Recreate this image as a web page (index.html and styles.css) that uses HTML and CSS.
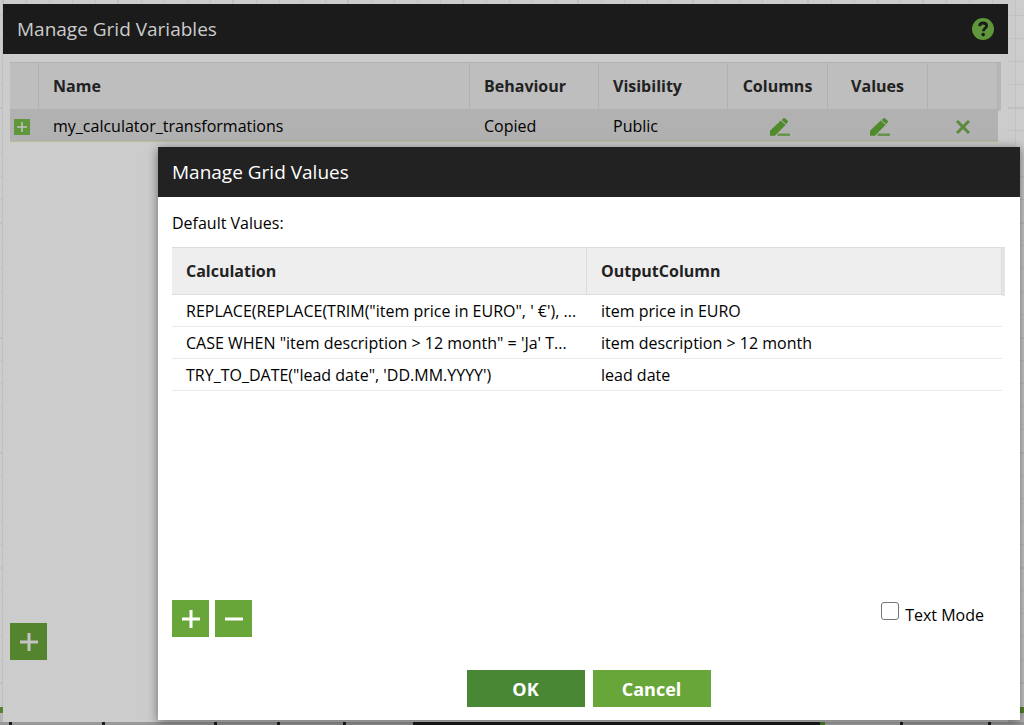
FILE: index.html
```
<!DOCTYPE html>
<html lang="en">
<head>
    <meta charset="UTF-8">
    <meta name="viewport" content="width=device-width, initial-scale=1.0">
    <title>Manage Grid Variables</title>
    <link rel="stylesheet" href="styles.css">
</head>
<body>

    <!-- Grid Variables window -->
    <main class="window">
        <header class="title-bar">
            <h1>Manage Grid Variables</h1>
            <button type="button" class="help-btn" aria-label="Help">
                <svg viewBox="0 0 22 22" width="22" height="22">
                    <circle cx="11" cy="11" r="11" fill="#60973a"/>
                    <path d="M7.600 8.200C7.800 6 9.200 5 11.100 5C13.200 5 14.600 6.200 14.600 8C14.600 10.300 11.300 10.300 11.300 13.200" fill="none" stroke="#1b1b1b" stroke-width="2.800"/>
                    <circle cx="11.200" cy="16.600" r="1.800" fill="#1b1b1b"/>
                </svg>
            </button>
        </header>

        <div class="window-body">
            <div class="table-wrap">
                <table class="variables">
                    <colgroup>
                        <col class="col-expand">
                        <col>
                        <col class="col-text">
                        <col class="col-text">
                        <col class="col-action">
                        <col class="col-action">
                        <col class="col-delete">
                    </colgroup>
                    <thead>
                        <tr>
                            <th></th>
                            <th>Name</th>
                            <th>Behaviour</th>
                            <th>Visibility</th>
                            <th class="center">Columns</th>
                            <th class="center">Values</th>
                            <th></th>
                        </tr>
                    </thead>
                    <tbody>
                        <tr>
                            <td class="expand">
                                <button type="button" class="icon-btn" aria-label="Expand">
                                    <svg viewBox="0 0 16 16" width="16" height="16">
                                        <path d="M0 0H16V16H0Z" fill="#60973a"/>
                                        <path d="M8 3V13M3 8H13" stroke="#c4c4c4" stroke-width="1.500"/>
                                    </svg>
                                </button>
                            </td>
                            <td>my_calculator_transformations</td>
                            <td>Copied</td>
                            <td>Public</td>
                            <td class="center">
                                <button type="button" class="icon-btn edit-btn" aria-label="Edit columns">
                                    <svg viewBox="0 0 20 18" width="20" height="18">
                                        <path d="M0 17.800V12.800L10.800 2.500L15.600 7L4.800 17.800ZM11.600 1.900L13.600 0.200Q14.400 -0.300 15.200 0.500L17.700 2.700Q18.400 3.500 17.700 4.200L16.100 6.200Z" fill="#4f8a2b"/>
                                        <path d="M7.500 16.700H20" stroke="#64924a" stroke-width="2.400"/>
                                    </svg>
                                </button>
                            </td>
                            <td class="center">
                                <button type="button" class="icon-btn edit-btn" aria-label="Edit values">
                                    <svg viewBox="0 0 20 18" width="20" height="18">
                                        <path d="M0 17.800V12.800L10.800 2.500L15.600 7L4.800 17.800ZM11.600 1.900L13.600 0.200Q14.400 -0.300 15.200 0.500L17.700 2.700Q18.400 3.500 17.700 4.200L16.100 6.200Z" fill="#4f8a2b"/>
                                        <path d="M7.500 16.700H20" stroke="#64924a" stroke-width="2.400"/>
                                    </svg>
                                </button>
                            </td>
                            <td class="center">
                                <button type="button" class="icon-btn" aria-label="Delete variable">
                                    <svg viewBox="0 0 14 14" width="14" height="14">
                                        <path d="M1 1L13 13M13 1L1 13" stroke="#5a8a3c" stroke-width="3"/>
                                    </svg>
                                </button>
                            </td>
                        </tr>
                    </tbody>
                </table>
            </div>

            <button type="button" class="square-btn dimmed" aria-label="Add variable">
                <svg viewBox="0 0 18 18" width="18" height="18">
                    <path d="M9 0V18M0 9H18" stroke="currentColor" stroke-width="3"/>
                </svg>
            </button>
        </div>
    </main>

    <!-- Task panel under the windows -->
    <footer class="task-panel">
        <span></span>
        <span></span>
        <span></span>
        <span></span>
        <span></span>
        <span class="selected"></span>
        <span class="next"></span>
        <span></span>
        <span></span>
    </footer>

    <!-- Grid Values dialog -->
    <section class="dialog" role="dialog" aria-labelledby="dialogTitle">
        <header class="title-bar">
            <h2 id="dialogTitle">Manage Grid Values</h2>
        </header>

        <form class="dialog-body">
            <p class="caption">Default Values:</p>

            <div class="table-wrap">
                <table class="values">
                    <thead>
                        <tr>
                            <th>Calculation</th>
                            <th>OutputColumn</th>
                        </tr>
                    </thead>
                    <tbody>
                        <tr>
                            <td>REPLACE(REPLACE(TRIM("item price in EURO", ' €'), ...</td>
                            <td>item price in EURO</td>
                        </tr>
                        <tr>
                            <td>CASE WHEN "item description &gt; 12 month" = 'Ja' T...</td>
                            <td>item description &gt; 12 month</td>
                        </tr>
                        <tr>
                            <td>TRY_TO_DATE("lead date", 'DD.MM.YYYY')</td>
                            <td>lead date</td>
                        </tr>
                    </tbody>
                </table>
            </div>

            <div class="toolbar">
                <button type="button" class="square-btn" aria-label="Add row">
                    <svg viewBox="0 0 18 18" width="18" height="18">
                        <path d="M9 0V18M0 9H18" stroke="currentColor" stroke-width="3"/>
                    </svg>
                </button>
                <button type="button" class="square-btn" aria-label="Remove row">
                    <svg viewBox="0 0 18 18" width="18" height="18">
                        <path d="M0 9H18" stroke="currentColor" stroke-width="3"/>
                    </svg>
                </button>
                <div class="text-mode">
                    <input type="checkbox" id="textMode">
                    <label for="textMode">Text Mode</label>
                </div>
            </div>

            <div class="actions">
                <button type="button" class="ok-btn">OK</button>
                <button type="button" class="cancel-btn">Cancel</button>
            </div>
        </form>
    </section>

</body>
</html>
```

FILE: styles.css
```
* {
    box-sizing: border-box;
}
body {
    margin: 0;
    min-height: 100vh;
    display: flex;
    flex-direction: column;
    font-family: "Open Sans", "Noto Sans", sans-serif;
    font-size: 16px;
    color: #000;
    background-color: #cccccc;
    background-image:
        linear-gradient(#54852e, #54852e),
        linear-gradient(#b4b4b4, #b4b4b4),
        linear-gradient(90deg, #c0c0c0 2px, transparent 2px),
        linear-gradient(#c0c0c0 2px, transparent 2px),
        linear-gradient(90deg, #c2c2c2 1px, transparent 1px),
        linear-gradient(#c2c2c2 1px, transparent 1px);
    background-size: 100% 6px, 100% 12px, 115px 115px, 115px 115px, 23px 23px, 23px 23px;
    background-position: left bottom 12px, left bottom, 2px 107px, 2px 107px, 3px 15px, 3px 15px;
    background-repeat: no-repeat, no-repeat, repeat, repeat, repeat, repeat;
}
h1, h2, p {
    margin: 0;
}
button {
    display: flex;
    align-items: center;
    justify-content: center;
    padding: 0;
    border: none;
    background: none;
    font-family: inherit;
    cursor: pointer;
}

/* Windows */
.window {
    flex: 1;
    display: flex;
    flex-direction: column;
    margin: 4px 16px 0 3px;
    background-color: #cccccc;
}
.title-bar {
    display: flex;
    align-items: center;
    justify-content: space-between;
    height: 50px;
    padding: 0 14px;
    background-color: #222222;
    color: #fff;
}
.title-bar h1, .title-bar h2 {
    font-size: 19px;
    font-weight: normal;
}
.window .title-bar {
    background-color: #1b1b1b;
    color: #cccccc;
}
.window-body {
    flex: 1;
    display: flex;
    flex-direction: column;
    justify-content: space-between;
    padding: 8px 7px 62px;
}

/* Tables */
.table-wrap {
    display: flex;
}
/* Header strip above the scrollbar */
.table-wrap::after {
    content: "";
    width: 3px;
    height: 48px;
    background-color: #e4e4e4;
    border-top: 1px solid #dddddd;
}
.window .table-wrap::after {
    background-color: #b7b7b7;
    border-color: #b1b1b1;
}
table {
    flex: 1;
    width: 100%;
    border-collapse: separate;
    border-spacing: 0;
    table-layout: fixed;
}
th, td {
    padding: 0 0 0 14px;
    text-align: left;
    white-space: nowrap;
    overflow: hidden;
}
th {
    height: 48px;
    color: #222222;
    background-color: #eeeeee;
    border-top: 1px solid #dddddd;
    border-bottom: 1px solid #dddddd;
    border-right: 1px solid #dddddd;
}
.variables th {
    background-color: #bebebe;
    border-color: #b1b1b1;
}
.variables td {
    height: 32px;
    background-color: #b1b1b1;
    border-bottom: 1px solid #b4bf94;
}
.variables .center {
    padding: 0;
    text-align: center;
}
.variables .expand {
    padding: 0 0 0 4px;
}
.col-expand {
    width: 29px;
}
.col-text {
    width: 129px;
}
.col-action {
    width: 100px;
}
.col-delete {
    width: 70px;
}
.values td {
    height: 32px;
    border-bottom: 1px solid #eaeaea;
}
.icon-btn {
    display: inline-flex;
    vertical-align: middle;
}
.edit-btn {
    margin-left: 4px;
}

/* Dialog */
.dialog {
    position: absolute;
    top: 147px;
    right: 4px;
    bottom: 5px;
    left: 158px;
    min-height: 500px;
    display: flex;
    flex-direction: column;
    background-color: #fff;
    box-shadow: 0 2px 10px rgba(0, 0, 0, 0.5);
}
.dialog-body {
    flex: 1;
    display: flex;
    flex-direction: column;
    padding: 14px 15px 13px 14px;
}
.caption {
    margin-bottom: 12px;
    line-height: 24px;
}
.toolbar {
    display: flex;
    gap: 6px;
    margin-top: auto;
    margin-bottom: 33px;
}
.square-btn {
    width: 37px;
    height: 37px;
    background-color: #69a63a;
    color: #fff;
}
.square-btn.dimmed {
    background-color: #54852e;
    color: #c4c4c4;
}
.text-mode {
    display: flex;
    align-items: center;
    gap: 6px;
    margin-left: auto;
    padding: 0 21px 8px 0;
}
.text-mode input {
    appearance: none;
    width: 18px;
    height: 18px;
    margin: 0 0 8px;
    border: 1px solid #767676;
    border-radius: 3px;
    background-color: #fff;
}
.text-mode input:checked {
    background-color: #69a63a;
}
.actions {
    display: flex;
    justify-content: center;
    gap: 8px;
}
.actions button {
    width: 118px;
    height: 37px;
    background-color: #69a63a;
    color: #fff;
    font-size: 18px;
    font-weight: bold;
}
.actions .ok-btn {
    background-color: #4a8735;
}

/* Task panel */
.task-panel {
    display: grid;
    grid-template-columns: 93fr 112fr 63fr 66fr 70fr 407fr 80fr 88fr 36fr;
    height: 3px;
    padding-left: 9px;
    background-color: #999999;
}
.task-panel span {
    border-left: 3px solid #1b1b1b;
}
.task-panel .selected {
    background-color: #1b1b1b;
}
.task-panel .next {
    background-color: #aaaaaa;
    border-left: 5px solid #54852e;
}
```
